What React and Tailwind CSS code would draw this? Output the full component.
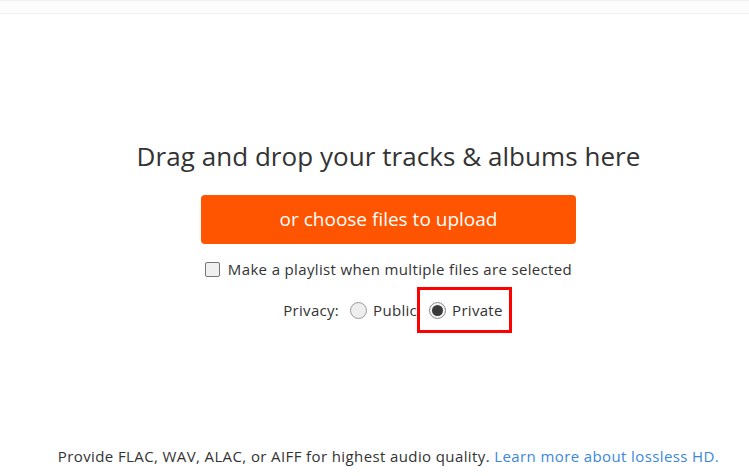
export default function App() {
  return (
    <div className="flex min-h-[476px] w-[749px] flex-col bg-white text-[#333]" style={{ fontFamily: '"Open Sans", "Liberation Sans", sans-serif' }}>
      <div className="h-[14px] border-y border-[#f0f0f0] bg-[#fcfcfc]" />
      <div className="flex flex-col items-center pl-[28px] pt-[125px]">
        <h1 className="text-[26px] leading-[34px] font-normal tracking-[0.05px] text-[#333]">Drag and drop your tracks &amp; albums here</h1>
        <button className="mt-[22px] h-[49px] w-[375px] rounded-[4px] bg-[#ff5500] text-[19px] text-white">or choose files to upload</button>
        <label className="mt-[15px] flex items-center gap-[8px] text-[15px] leading-[20px] tracking-[0.35px] text-[#333]">
          <span className="h-[15px] w-[15px] rounded-[2px] border border-[#767676] bg-[#f0f0f0]" />
          Make a playlist when multiple files are selected
        </label>
        <div className="ml-[18px] mt-[8px] flex items-center text-[15px] tracking-[0.3px] text-[#333]">
          <span className="mr-[11px]">Privacy:</span>
          <span className="mr-[6px] h-[17px] w-[17px] rounded-full border border-[#999] bg-[#eee]" />
          <span>Public</span>
          <span className="flex h-[46px] items-center border-[3px] border-[#f00] pl-[9px] pr-[6px]">
            <span className="mr-[6px] flex h-[17px] w-[17px] items-center justify-center rounded-full border border-[#888] bg-[#f4f4f4]">
              <span className="h-[11px] w-[11px] rounded-full bg-[#3a3a3a]" />
            </span>
            <span>Private</span>
          </span>
        </div>
      </div>
      <div className="mt-auto pb-[9px] pl-[28px] text-center text-[15px] leading-[22px] tracking-[0.39px] text-[#333]">
        Provide FLAC, WAV, ALAC, or AIFF for highest audio quality. <span className="text-[#3b87dc]">Learn more about lossless HD.</span>
      </div>
    </div>
  );
}
